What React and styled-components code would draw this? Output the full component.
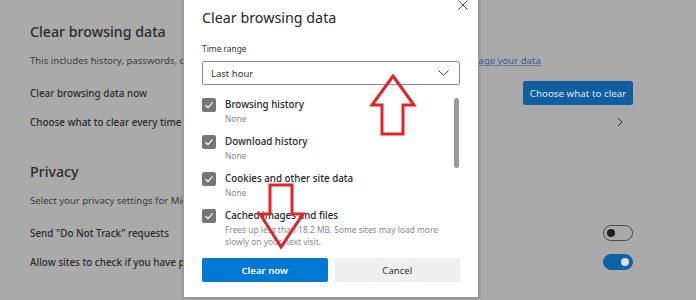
import React from 'react';
import styled, { createGlobalStyle } from 'styled-components';

const GlobalStyle = createGlobalStyle`
  html, body {
    margin: 0;
    padding: 0;
    background: #aaaaaa;
  }
  body {
    font-family: "Noto Sans", "Open Sans", sans-serif;
    overflow: hidden;
  }
`;

const Screen = styled.div`
  position: relative;
  width: 696px;
  height: 300px;
  overflow: hidden;
  background: #aaaaaa;
`;

const Page = styled.div`
  display: flex;
  flex-direction: column;
  padding: 20px 63px 0 30px;
  color: #262626;
`;

const Heading = styled.div`
  height: 24px;
  line-height: 24px;
  font-size: 14.2px;
  font-weight: 500;
  color: #2a2a2a;
  margin-top: ${p => p.$gap || 0}px;
`;

const Desc = styled.div`
  margin-top: 8px;
  height: 18px;
  line-height: 18px;
  font-size: 9.6px;
  color: #3b3b3b;
  white-space: nowrap;
`;

const Link = styled.span`
  color: #2d5f8c;
  text-decoration: underline;
  text-decoration-color: #5b7f9f;
`;

const Row = styled.div`
  display: flex;
  align-items: center;
  justify-content: space-between;
  height: ${p => p.$h || 28}px;
  margin-top: ${p => p.$gap || 0}px;
  font-size: 9.9px;
  font-weight: 500;
  color: #2b2b2b;
  white-space: nowrap;
`;

const DarkButton = styled.div`
  width: 110px;
  height: 24px;
  display: flex;
  align-items: center;
  justify-content: center;
  background: #105e9e;
  color: #dde8f2;
  font-size: 9.8px;
  font-weight: 400;
  border-radius: 2px;
`;

const Chevron = styled.svg`
  margin-right: 10px;
`;

const Toggle = styled.div`
  width: 30px;
  height: 16px;
  box-sizing: border-box;
  border-radius: 8px;
  display: flex;
  align-items: center;
  justify-content: ${p => (p.$on ? 'flex-end' : 'flex-start')};
  padding: 0 3px;
  background: ${p => (p.$on ? '#0f62a6' : 'transparent')};
  border: 1px solid ${p => (p.$on ? '#0f62a6' : '#4a4a4a')};
  &::after {
    content: '';
    width: 8px;
    height: 8px;
    border-radius: 50%;
    background: ${p => (p.$on ? '#d8e3ee' : '#1e1e1e')};
  }
`;

const Dialog = styled.div`
  position: absolute;
  left: 183px;
  top: -14px;
  width: 296px;
  box-sizing: border-box;
  background: #ffffff;
  border: 1px solid #9a9a9a;
  box-shadow: 0 0 3px rgba(0, 0, 0, 0.25);
  padding: 20px 18px 15px 18px;
  display: flex;
  flex-direction: column;
  color: #262626;
`;

const Close = styled.svg`
  position: absolute;
  top: 13px;
  right: 10px;
`;

const Title = styled.div`
  line-height: 22px;
  font-size: 14.3px;
  font-weight: 400;
  color: #262626;
`;

const Label = styled.div`
  margin-top: 13px;
  line-height: 14px;
  font-size: 8.4px;
  color: #333;
`;

const Select = styled.div`
  margin-top: 5px;
  height: 24px;
  box-sizing: border-box;
  border: 1px solid #8c8c8c;
  border-radius: 2px;
  display: flex;
  align-items: center;
  justify-content: space-between;
  padding: 0 10px 0 8px;
  font-size: 9.5px;
  color: #333;
`;

const ListArea = styled.div`
  margin-top: 13px;
  height: 153px;
  display: flex;
  overflow: hidden;
`;

const Items = styled.div`
  flex: 1;
  display: flex;
  flex-direction: column;
`;

const Scrollbar = styled.div`
  width: 6px;
  display: flex;
  flex-direction: column;
  &::before {
    content: '';
    height: 70px;
    width: 5px;
    border-radius: 3px;
    background: #9a9a9a;
  }
`;

const Item = styled.div`
  display: flex;
  gap: 9px;
  padding-bottom: 10px;
`;

const Box = styled.div`
  width: 14px;
  height: 14px;
  flex-shrink: 0;
  border-radius: 2px;
  background: #767676;
  display: flex;
  align-items: center;
  justify-content: center;
`;

const ItemText = styled.div`
  display: flex;
  flex-direction: column;
`;

const ItemTitle = styled.div`
  height: 14px;
  line-height: 14px;
  font-size: 9.8px;
  font-weight: 500;
  color: #262626;
`;

const ItemSub = styled.div`
  height: ${p => (p.$multi ? 11 : 13)}px;
  line-height: ${p => (p.$multi ? 11 : 13)}px;
  margin-top: ${p => (p.$multi ? 1 : 0)}px;
  font-size: 8.4px;
  color: #8a8a8a;
  white-space: nowrap;
`;

const Buttons = styled.div`
  margin-top: 7px;
  display: grid;
  grid-template-columns: 1fr 1fr;
  gap: 7px;
`;

const Btn = styled.div`
  height: 24px;
  display: flex;
  align-items: center;
  justify-content: center;
  font-size: 9.6px;
  font-weight: ${p => (p.$primary ? 600 : 400)};
  background: ${p => (p.$primary ? '#0078d4' : '#efefef')};
  color: ${p => (p.$primary ? '#ffffff' : '#333333')};
  border-radius: 2px;
`;

const Arrows = styled.svg`
  position: absolute;
  left: 0;
  top: 0;
  pointer-events: none;
`;

const Check = () => (
  <svg width="10" height="10" viewBox="0 0 10 10">
    <path d="M1.5 5.2 L4 7.6 L8.6 2.4" fill="none" stroke="#fff" strokeWidth="1.3" />
  </svg>
);

const items = [
  { title: 'Browsing history', sub: ['None'] },
  { title: 'Download history', sub: ['None'] },
  { title: 'Cookies and other site data', sub: ['None'] },
  {
    title: 'Cached images and files',
    sub: ['Frees up less than 18.2 MB. Some sites may load more', 'slowly on your next visit.'],
  },
];

export default function App() {
  return (
    <Screen>
      <GlobalStyle />
      <Page>
        <Heading>Clear browsing data</Heading>
        <Desc>
          This includes history, passwords, cookies, and more. Only data from this profile will be deleted.{' '}
          <Link>Manage your data</Link>
        </Desc>
        <Row $h={30} $gap={8}>
          <span>Clear browsing data now</span>
          <DarkButton>Choose what to clear</DarkButton>
        </Row>
        <Row>
          <span>Choose what to clear every time you close the browser</span>
          <Chevron width="6" height="10" viewBox="0 0 6 10">
            <path d="M1 1 L5 5 L1 9" fill="none" stroke="#333" strokeWidth="1" />
          </Chevron>
        </Row>
        <Heading $gap={24}>Privacy</Heading>
        <Desc>Select your privacy settings for Microsoft Edge. Learn more about these settings</Desc>
        <Row $h={30} $gap={8}>
          <span>Send "Do Not Track" requests</span>
          <Toggle />
        </Row>
        <Row>
          <span>Allow sites to check if you have payment methods saved</span>
          <Toggle $on />
        </Row>
      </Page>

      <Dialog>
        <Close width="10" height="10" viewBox="0 0 10 10">
          <path d="M0.5 0.5 L9.5 9.5 M9.5 0.5 L0.5 9.5" stroke="#444" strokeWidth="1" />
        </Close>
        <Title>Clear browsing data</Title>
        <Label>Time range</Label>
        <Select>
          <span>Last hour</span>
          <svg width="11" height="6" viewBox="0 0 11 6">
            <path d="M0.5 0.5 L5.5 5.3 L10.5 0.5" fill="none" stroke="#444" strokeWidth="1" />
          </svg>
        </Select>
        <ListArea>
          <Items>
            {items.map(it => (
              <Item key={it.title}>
                <Box>
                  <Check />
                </Box>
                <ItemText>
                  <ItemTitle>{it.title}</ItemTitle>
                  {it.sub.map(s => (
                    <ItemSub key={s} $multi={it.sub.length > 1}>
                      {s}
                    </ItemSub>
                  ))}
                </ItemText>
              </Item>
            ))}
          </Items>
          <Scrollbar />
        </ListArea>
        <Buttons>
          <Btn $primary>Clear now</Btn>
          <Btn>Cancel</Btn>
        </Buttons>
      </Dialog>

      <Arrows width="696" height="300" viewBox="0 0 696 300">
        <polygon
          points="393,76 414,105 403,105 403,134 382,134 382,105 372,105"
          fill="none"
          stroke="#e3222c"
          strokeWidth="3"
          strokeLinejoin="miter"
        />
        <polygon
          points="270,185 292,185 292,214 303,214 281,247 260,214 270,214"
          fill="none"
          stroke="#e3222c"
          strokeWidth="3"
          strokeLinejoin="miter"
        />
      </Arrows>
    </Screen>
  );
}
